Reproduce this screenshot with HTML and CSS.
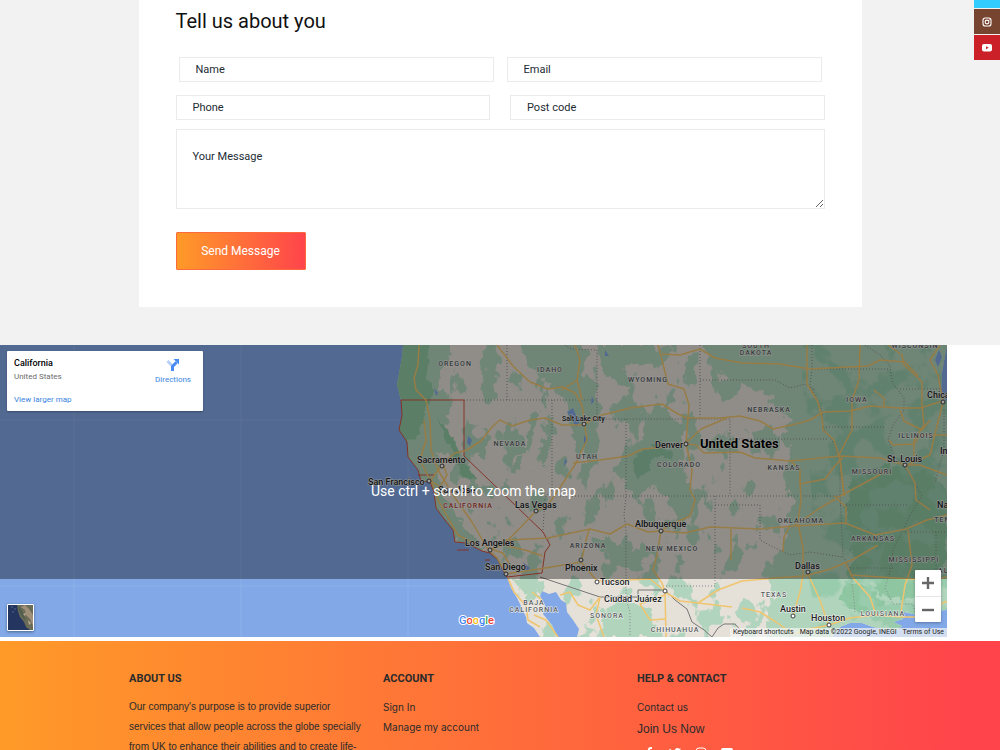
FILE: index.html
```html
<!DOCTYPE html>
<html lang="en">
<head>
    <meta charset="UTF-8">
    <meta name="viewport" content="width=device-width, initial-scale=1.0">
    <title>Contact Us</title>
    <link rel="stylesheet" href="styles.css">
</head>

<body>
    <!-- Sticky social links -->
    <nav class="social-bar" aria-label="Social links">
        <a class="twitter" href="#" aria-label="Twitter"></a>
        <a class="instagram" href="#" aria-label="Instagram">
            <svg width="10" height="10" viewBox="0 0 10 10" fill="none" stroke="#fff">
                <rect x="1" y="1" width="8" height="8" rx="2.3" stroke-width="1.1"/>
                <circle cx="5" cy="5" r="1.9" stroke-width="1.1"/>
                <circle cx="7.3" cy="2.8" r=".5" fill="#fff" stroke="none"/>
            </svg>
        </a>
        <a class="youtube" href="#" aria-label="YouTube">
            <svg width="10" height="8" viewBox="0 0 10 8">
                <rect width="10" height="7.4" rx="2" fill="#fff"/>
                <path d="M4 2.2 6.7 3.7 4 5.2z" fill="#cb2027"/>
            </svg>
        </a>
    </nav>

    <!-- Contact form -->
    <section class="contact">
        <form class="contact-form">
            <h2>Tell us about you</h2>
            <div class="row row-top">
                <input type="text" placeholder="Name" aria-label="Name">
                <input type="email" placeholder="Email" aria-label="Email">
            </div>
            <div class="row">
                <input type="tel" placeholder="Phone" aria-label="Phone">
                <input type="text" placeholder="Post code" aria-label="Post code">
            </div>
            <textarea placeholder="Your Message" aria-label="Your Message"></textarea>
            <button type="submit" class="send-btn">Send Message</button>
        </form>
    </section>

    <!-- Map -->
    <section class="map-section">
        <div class="map">
            <svg class="map-canvas" viewBox="0 345 947 292" preserveAspectRatio="xMidYMid slice" role="img" aria-label="Map of California">
                <defs>
                    <filter id="rough" x="-5%" y="-5%" width="110%" height="110%" color-interpolation-filters="sRGB">
                        <feTurbulence type="fractalNoise" baseFrequency=".09" numOctaves="3" seed="4"/>
                        <feDisplacementMap in="SourceGraphic" scale="14" xChannelSelector="R" yChannelSelector="G"/>
                    </filter>
                    <filter id="scatter" x="0" y="0" width="100%" height="100%" color-interpolation-filters="sRGB">
                        <feTurbulence type="fractalNoise" baseFrequency=".05 .035" numOctaves="4" seed="11"/>
                        <feColorMatrix values="0 0 0 0 .69  0 0 0 0 .83  0 0 0 0 .74  22 0 0 0 -12.6"/>
                        <feComposite in2="SourceGraphic" operator="in"/>
                    </filter>
                    <filter id="woods" x="0" y="0" width="100%" height="100%" color-interpolation-filters="sRGB">
                        <feTurbulence type="fractalNoise" baseFrequency=".035" numOctaves="4" seed="7"/>
                        <feColorMatrix values="0 0 0 0 .6  0 0 0 0 .8  0 0 0 0 .68  10 0 0 0 -5"/>
                        <feComposite in2="SourceGraphic" operator="in"/>
                    </filter>
                    <clipPath id="land">
                        <path d="M403 345 402 357 397 385 401 400 402 415 399 430 407 442 408 457 418 470 421 481 430 482 434 492 436 508 445 520 453 530 455 542 466 543 482 551 490 553 498 560 503 570 507 577 511 588 517 598 521 606 526 617 527 623 534 628 540 637 557 637 552 625 543 614 545 605 540 596 542 591 549 594 556 592 561 600 566 603 567 612 573 620 579 629 577 637 832 637 840 627 850 623 862 623 873 627 883 629 896 631 902 626 893 622 903 619 904 612 918 615 930 611 947 610V403L941 392 942 372 947 345z"/>
                    </clipPath>
                </defs>

                <rect x="0" y="345" width="947" height="292" fill="#82a8e7"/>
                <path class="grid-line" d="M74 345V637M241 345V637M408 345V637M0 420H401M0 586H510"/>

                <g clip-path="url(#land)">
                    <rect x="390" y="340" width="560" height="300" fill="#e5e0d8"/>
                    <rect x="450" y="340" width="330" height="300" filter="url(#scatter)"/>

                    <g filter="url(#rough)">
                        <!-- Plains and eastern states -->
                        <path fill="#b0d4bc" d="M700 330 712 370 742 385 768 392 778 410 790 420 782 440 792 452 780 475 792 500 785 540 770 566 775 600 766 622 774 650H960V330z"/>
                        <!-- Pacific coast -->
                        <path fill="#b0d4bc" d="M390 330H455L445 362 440 385 450 400 446 425 459 450 475 476 487 497 470 488 454 465 440 450 438 482 452 510 476 541 488 549 470 548 440 530 425 490 400 470 385 430z"/>
                        <path fill="#8fc8a2" d="M390 330H430L426 372 433 390 424 420 412 440 398 440 385 400z"/>
                        <path fill="#8fc8a2" d="M440 420 450 432 460 455 478 480 470 483 452 458z"/>
                        <!-- Rockies -->
                        <path fill="#b0d4bc" d="M520 340H575L590 355 580 372 598 385 596 420 588 440 578 460 572 430 566 400 550 385 530 368z"/>
                        <path fill="#b0d4bc" d="M597 345H650L662 360 655 370 640 360 622 365 634 392 615 382 600 365z"/>
                        <path fill="#b0d4bc" d="M645 420 668 412 684 428 682 455 690 485 694 510 680 522 668 498 650 485 636 500 620 478 628 452 642 440z"/>
                        <path fill="#92c7a4" d="M640 448 660 442 672 455 652 462 640 478 632 462z"/>
                        <path fill="#b0d4bc" d="M590 540 610 538 624 548 645 550 642 572 622 568 606 556z"/>
                        <path fill="#b0d4bc" d="M675 556 683 554 680 574 674 572z"/>
                        <path fill="#b0d4bc" d="M600 610 625 600 648 608 660 637H606z"/>
                        <path fill="#b0d4bc" d="M512 580 525 582 540 600 530 600 522 590z"/>
                        <path fill="#b0d4bc" d="M484 430 489 428 484 460 478 455zM533 412 538 413 530 450 524 448zM547 430 550 432 545 468 539 460zM516 455 522 455 517 476 511 470z"/>
                        <path fill="#b0d4bc" d="M714 345H800V378L765 374 740 380 722 370z"/>
                        <!-- Forests -->
                        <path fill="#8ec6a1" d="M852 475 890 465 930 470 947 490V560L925 590 905 600 880 595 865 570 850 550 843 520z"/>
                        <path fill="#8ec6a1" d="M856 545H885L892 560 880 575 850 578z"/>
                        <path fill="#8ec6a1" d="M845 580 875 590 885 612 860 612 838 600z"/>
                    </g>
                    <path d="M800 345H947V637H820L808 575 812 500z" filter="url(#woods)"/>
                    <path fill="#82a8e7" d="M567 412 573 408 576 415 581 420 576 427 572 420zM468 436 472 440 470 446 467 443zM434 388 438 393 436 396zM584 435 587 440 584 444zM592 396 594 402 591 404zM523 562 530 568 527 572zM939 350 942 357 938 367 935 360zM565 458 567 462 564 466zM605 350 609 356 605 356z"/>
                </g>

                <!-- State borders -->
                <path class="border" d="M507 345V400M464 400H597M552 400V490L545 497 543 530M565 345 571 349 597 350V419H730V496M626 419V496L624 515 626 530V600L630 612V637M560 496H761M700 345V419M700 380H775L790 388 805 384 815 390M730 439H828M715 496V586H663M715 505H760V540L775 548 790 555 810 552 842 557M761 496H840M812 345V370L810 385 822 410 823 428 835 445 840 462V495L843 556 850 568 853 590 855 612M812 369H890M823 427H886M850 568H893M865 345 880 355 890 366 892 382 904 398 904 410 893 425 888 440 894 455 905 468 915 483 922 496 910 515 902 532 893 550 891 568 885 588 893 604H913L916 615M900 389H940M936 532V600M905 532H947M840 505H908M944 410V450L935 482"/>
                <path class="country" d="M540 577 600 597H638V590H665L675 600 687 609 692 622 704 630 712 637 718 628 724 624 735 624 742 632"/>
                <path class="california" d="M401 400H464V456L543 532 550 545 545 552 542 573 507 577 503 570 498 560 490 553 482 551 466 543 455 542 453 530 445 520 436 508 434 492 430 482 421 481 418 470 408 457 407 442 399 430 402 415 401 400M418 475H435M457 550H469M485 560H490"/>

                <!-- Highways -->
                <g class="roads">
                    <path d="M419 345 418 365 414 378 416 390 426 400 430 420 431 450 438 470 455 498 472 522 487 548 497 558 506 574"/>
                    <path d="M431 480 444 462 455 453 467 450 481 441 492 427 500 420 512 426 530 420 545 418 562 425H583L592 420"/>
                    <path d="M497 345 513 366 530 382 548 389 562 387 575 393 582 405 584 420 587 440 576 463 565 480 548 505 536 511 520 528 503 545 490 550"/>
                    <path d="M575 345 580 360 577 380 562 390M577 380 582 400M583 423 602 415 630 408 662 404 678 414 687 418H720L740 416 760 421 773 429 800 423 812 419 823 412 850 411 870 406 900 408 920 408 943 401"/>
                    <path d="M658 345 662 360 668 384 684 389 689 405 686 444 692 470 690 490 695 500 690 516 670 525 661 531 657 555 653 570 662 583 665 592 666 637"/>
                    <path d="M573 463 600 460 628 456 643 449 665 447 686 443 701 429 727 418M686 444 696 445 704 453 740 452 755 458 790 461 840 456 880 458 905 465"/>
                    <path d="M662 354 680 355 700 349 715 358 742 363 780 364 810 369 868 366 880 360 905 362 918 376"/>
                    <path d="M807 345V384L818 402 822 418 823 430 834 440 840 460 844 496M860 345 859 380 852 400 852 430 844 445 838 457"/>
                    <path d="M490 550 507 540 548 538 590 529 610 534 627 524 648 532 661 531 685 533 710 527 760 529 794 526 845 523 875 535 906 529 927 520 947 515"/>
                    <path d="M506 574 545 568 581 562 597 581 625 580 650 579 665 591M581 562 587 537 589 530M665 592 680 601 698 603 718 590 742 581 775 578 805 576 830 569 852 560 878 545"/>
                    <path d="M800 480 801 500 798 523 803 548 803 575 800 592 793 616M807 572 820 600 828 624M794 526 817 510 842 495 870 480 888 470M790 526 784 537 783 552M846 523V507L834 496M845 562 853 578 870 597 876 615M850 575 895 578 930 580 947 577M908 530 912 565 905 585 901 612M905 465 915 483 916 500 930 510M905 465 920 465 947 475"/>
                    <path d="M888 345 902 355 904 365 915 375 922 382V405L924 425 914 440 914 456M940 345 930 360 938 375 943 402 936 430 930 455 905 466M900 410 904 421 922 430 930 420M889 440 893 445 914 444 920 435H947M843 457 834 467 825 479 800 484 800 470 790 460M840 458 844 496M874 390 884 398 884 406"/>
                    <path d="M698 603 732 607M731 529V560M742 608 760 612 776 622 793 634 810 629 829 625 850 618 875 615 902 617 915 617 947 601M666 619 650 620 640 604 665 595M560 595 570 592 578 605 590 610 600 597M600 597 596 615 604 637M508 578 514 592 526 606 528 620 540 627M534 615 546 620 558 637M532 592 542 600"/>
                    <path d="M424 420 426 440 420 460 430 480 440 487 447 475 442 462M431 480 438 500 447 516 458 535 477 545M487 548 503 553 510 565M503 545 525 550 543 556"/>
                </g>

                <!-- State names -->
                <g class="state">
                    <text x="455" y="366">OREGON</text>
                    <text x="550" y="372">IDAHO</text>
                    <text x="648" y="382">WYOMING</text>
                    <text x="756" y="348">SOUTH</text>
                    <text x="756" y="355">DAKOTA</text>
                    <text x="915" y="348">WISCONSIN</text>
                    <text x="769" y="412">NEBRASKA</text>
                    <text x="857" y="402">IOWA</text>
                    <text x="916" y="438">ILLINOIS</text>
                    <text x="510" y="446">NEVADA</text>
                    <text x="587" y="459">UTAH</text>
                    <text x="679" y="467">COLORADO</text>
                    <text x="784" y="470">KANSAS</text>
                    <text x="872" y="474">MISSOURI</text>
                    <text x="468" y="508" class="red">CALIFORNIA</text>
                    <text x="588" y="548">ARIZONA</text>
                    <text x="672" y="551">NEW MEXICO</text>
                    <text x="801" y="523">OKLAHOMA</text>
                    <text x="873" y="541">ARKANSAS</text>
                    <text x="958" y="522">TENNESSEE</text>
                    <text x="914" y="562">MISSISSIPPI</text>
                    <text x="958" y="573">ALABAMA</text>
                    <text x="774" y="597">TEXAS</text>
                    <text x="883" y="616">LOUISIANA</text>
                    <text x="534" y="605">BAJA</text>
                    <text x="534" y="612">CALIFORNIA</text>
                    <text x="607" y="618">SONORA</text>
                    <text x="675" y="632">CHIHUAHUA</text>
                </g>

                <!-- Cities -->
                <g class="dots">
                    <circle cx="442" cy="466" r="2"/>
                    <circle cx="429" cy="481" r="2"/>
                    <circle cx="536" cy="511" r="2"/>
                    <circle cx="490" cy="550" r="2"/>
                    <circle cx="506" cy="574" r="2"/>
                    <circle cx="584" cy="424" r="2"/>
                    <circle cx="686" cy="444" r="2"/>
                    <circle cx="581" cy="560" r="2"/>
                    <circle cx="597" cy="582" r="2"/>
                    <circle cx="665" cy="591" r="2"/>
                    <circle cx="661" cy="531" r="2"/>
                    <circle cx="808" cy="572" r="2"/>
                    <circle cx="793" cy="616" r="2"/>
                    <circle cx="829" cy="625" r="2"/>
                    <circle cx="905" cy="465" r="2"/>
                    <circle cx="943" cy="402" r="2"/>
                </g>
                <g class="city">
                    <text x="417" y="463">Sacramento</text>
                    <text x="368" y="485">San Francisco</text>
                    <text x="438" y="493">San Jose</text>
                    <text x="515" y="508">Las Vegas</text>
                    <text x="465" y="546">Los Angeles</text>
                    <text x="485" y="570">San Diego</text>
                    <text x="562" y="421" class="small">Salt Lake City</text>
                    <text x="655" y="448">Denver</text>
                    <text x="565" y="571">Phoenix</text>
                    <text x="600" y="585">Tucson</text>
                    <text x="604" y="602">Ciudad Juárez</text>
                    <text x="635" y="527">Albuquerque</text>
                    <text x="795" y="569">Dallas</text>
                    <text x="780" y="612">Austin</text>
                    <text x="811" y="621">Houston</text>
                    <text x="887" y="462">St. Louis</text>
                    <text x="927" y="398">Chicago</text>
                    <text x="940" y="454">Indianapolis</text>
                    <text x="937" y="508">Nashville</text>
                    <text x="700" y="448" class="country-name">United States</text>
                </g>
                <text x="459" y="624" class="google"><tspan fill="#4285f4">G</tspan><tspan fill="#ea4335">o</tspan><tspan fill="#fbbc05">o</tspan><tspan fill="#4285f4">g</tspan><tspan fill="#34a853">l</tspan><tspan fill="#ea4335">e</tspan></text>
            </svg>

            <div class="map-overlay"></div>
            <p class="map-hint">Use ctrl + scroll to zoom the map</p>

            <div class="place-card">
                <div class="place-info">
                    <strong>California</strong>
                    <span>United States</span>
                    <a href="#">View larger map</a>
                </div>
                <a class="directions" href="#">
                    <svg width="14" height="14" viewBox="0 0 14 14">
                        <path d="M6.5 8 1.5 3" fill="none" stroke="#b3cffa" stroke-width="3"/>
                        <path d="M6.5 13V8.500L10.500 4.300" fill="none" stroke="#4a8af4" stroke-width="3"/>
                        <path d="M7.500 1H13v5.500z" fill="#4a8af4"/>
                    </svg>
                    Directions
                </a>
            </div>

            <button type="button" class="satellite" aria-label="Show satellite imagery">
                <svg width="25" height="25" viewBox="0 0 25 25">
                    <rect width="25" height="25" fill="#24365f"/>
                    <path d="M9 0 10 6 12 12 16 17 18 22 22 25H25V0z" fill="#6a6c58"/>
                    <path d="M13 2 17 5 18 10 22 14 25 21V10L21 4 17 0z" fill="#a08f79"/>
                    <path d="M10 1 12 8 15 13 18 16 15 8 13 4z" fill="#4f5e4b"/>
                    <path d="M15 9 18 8 17 11zM20 15 23 18 21 20z" fill="#c0ab92"/>
                    <path d="M3 2H5M6 4H8M4 7H6" stroke="#4a668f"/>
                </svg>
            </button>

            <div class="zoom">
                <button type="button" aria-label="Zoom in">
                    <svg width="12" height="12" viewBox="0 0 12 12"><path d="M6 0V12M0 6H12" stroke="#666" stroke-width="2.4"/></svg>
                </button>
                <button type="button" aria-label="Zoom out">
                    <svg width="12" height="12" viewBox="0 0 12 12"><path d="M0 6H12" stroke="#666" stroke-width="2.4"/></svg>
                </button>
            </div>

            <div class="attribution">
                <a href="#">Keyboard shortcuts</a>
                <span>Map data ©2022 Google, INEGI</span>
                <a href="#">Terms of Use</a>
            </div>
        </div>
    </section>

    <!-- Footer -->
    <footer>
        <div class="footer-columns">
            <div class="about">
                <h3>ABOUT US</h3>
                <p>Our company's purpose is to provide superior services that allow people across the globe specially from UK to enhance their abilities and to create life-</p>
            </div>
            <div>
                <h3>ACCOUNT</h3>
                <a href="#">Sign In</a>
                <a href="#">Manage my account</a>
            </div>
            <div>
                <h3>HELP &amp; CONTACT</h3>
                <a href="#">Contact us</a>
                <p class="join">Join Us Now</p>
                <div class="join-icons">
                    <a href="#" aria-label="Facebook">
                        <svg width="12" height="12" viewBox="0 0 12 12"><path d="M4.800 12V7H3V5h1.800V3.300C4.800 1.200 6 0 7.800 0H9v2H8c-.8 0-1.100.4-1.100 1.100V5H9L8.700 7H6.900v5z" fill="#fff"/></svg>
                    </a>
                    <a href="#" aria-label="Twitter">
                        <svg width="12" height="12" viewBox="0 0 12 12"><path d="M12 2.500 10.800 3.700C10.800 8 7.500 11 4 11 2.500 11 1 10.500 0 9.800c1.300.1 2.500-.2 3.500-1C2.300 8.700 1.500 8 1.200 7h1C1 6.600.3 5.500.4 4.500l1 .3C.4 4 .1 2.500.7 1.500 2 3 3.800 4 6 4 5.600 2 7 1 8.400 1c.7 0 1.300.3 1.800.8L11.700 1.200 10.800 2.600z" fill="#fff"/></svg>
                    </a>
                    <a href="#" aria-label="Instagram">
                        <svg width="12" height="12" viewBox="0 0 12 12" fill="none" stroke="#fff"><rect x="1" y="1" width="10" height="10" rx="3"/><circle cx="6" cy="6" r="2.300"/></svg>
                    </a>
                    <a href="#" aria-label="YouTube">
                        <svg width="12" height="12" viewBox="0 0 12 12"><rect y="1" width="12" height="9" rx="2" fill="#fff"/><path d="M5 3.500 8 5.500 5 7.500z" fill="#ff5a45"/></svg>
                    </a>
                </div>
            </div>
        </div>
    </footer>
</body>

</html>
```
FILE: styles.css
```css
* {
    box-sizing: border-box;
}

body {
    margin: 0;
    font-family: Roboto, "Liberation Sans", sans-serif;
    background-color: #fff;
    color: #111;
}

a {
    text-decoration: none;
}

/* Social links on the right edge */
.social-bar {
    position: fixed;
    top: -17px;
    right: 0;
    z-index: 10;
    display: flex;
    flex-direction: column;
    gap: 1px;
}

.social-bar a {
    width: 26px;
    height: 25px;
    display: flex;
    align-items: center;
    justify-content: center;
}

.twitter {
    background-color: #3cf;
}

.instagram {
    background-color: #774430;
}

.youtube {
    background-color: #cb2027;
}

/* Contact form */
.contact {
    background-color: #f2f2f2;
    padding-bottom: 38px;
}

.contact-form {
    max-width: 723px;
    margin: 0 auto;
    padding: 9px 37px 37px;
    background-color: #fff;
}

h2 {
    margin: 0 0 23px;
    font-size: 20px;
    line-height: 25px;
    font-weight: 400;
}

.row {
    display: flex;
    gap: 20px;
    margin-bottom: 9px;
}

.row-top {
    gap: 13px;
    margin: 0 3px 13px;
}

.row input {
    flex: 1;
    min-width: 0;
    height: 25px;
    padding: 0 16px;
}

input,
textarea {
    border: 1px solid #ebebeb;
    background-color: #fff;
    font-family: inherit;
    font-size: 11px;
    color: #222b33;
}

input::placeholder,
textarea::placeholder {
    color: #222b33;
    opacity: 1;
}

textarea {
    display: block;
    width: 100%;
    height: 80px;
    padding: 20px 16px;
    resize: vertical;
}

.send-btn {
    display: block;
    width: 130px;
    height: 38px;
    margin-top: 23px;
    border: 1px solid #ff6a3c;
    border-radius: 1px;
    background: linear-gradient(to right, #ff9a28, #ff444b);
    color: #fff;
    font-family: inherit;
    font-size: 12px;
    cursor: pointer;
}

/* Map */
.map-section {
    padding: 0 53px 4px 0;
}

.map {
    position: relative;
    height: 292px;
    overflow: hidden;
}

.map-canvas {
    display: block;
    width: 100%;
    height: 100%;
}

.grid-line {
    stroke: #8eb0e7;
    fill: none;
}

.border {
    fill: none;
    stroke: #85868a;
    stroke-dasharray: 1 2;
}

.country {
    fill: none;
    stroke: #777;
}

.california {
    fill: none;
    stroke: #d0503f;
}

.roads {
    fill: none;
    stroke: #f0c56f;
    stroke-width: 1.5;
    stroke-linejoin: round;
}

.state text {
    font-size: 7px;
    font-weight: 500;
    letter-spacing: 1px;
    text-anchor: middle;
    fill: #55595d;
    stroke: #f4f4f0;
    stroke-width: 1px;
    paint-order: stroke;
}

.state .red {
    fill: #b3372c;
}

.dots {
    fill: #fff;
    stroke: #3c3f42;
}

.city text {
    font-size: 9px;
    font-weight: 500;
    fill: #202124;
    stroke: #f4f4f0;
    stroke-width: 1px;
    paint-order: stroke;
}

.city .small {
    font-size: 7px;
}

.city .country-name {
    font-size: 13px;
    font-weight: 700;
    fill: #000;
}

.google {
    font-size: 11px;
    font-weight: 500;
    stroke: #fff;
    stroke-width: 2px;
    paint-order: stroke;
}

.map-overlay {
    position: absolute;
    top: 0;
    left: 0;
    width: 100%;
    height: 80%;
    background-color: rgba(0, 0, 0, 0.37);
}

.map-hint {
    position: absolute;
    top: 50%;
    width: 100%;
    margin: -9px 0 0;
    line-height: 18px;
    font-size: 14px;
    text-align: center;
    color: #fff;
}

.place-card {
    position: absolute;
    top: 6px;
    left: 7px;
    width: 196px;
    height: 60px;
    padding: 6px 12px 0 7px;
    display: flex;
    justify-content: space-between;
    background-color: #fff;
    border-radius: 1px;
    box-shadow: 0 1px 2px rgba(0, 0, 0, 0.3);
    font-size: 8px;
}

.place-info {
    display: flex;
    flex-direction: column;
}

.place-info strong {
    font-size: 9px;
    line-height: 12px;
    font-weight: 500;
    color: #000;
}

.place-info span {
    margin: 2px 0 11px;
    line-height: 12px;
    color: #6b6b6b;
}

.place-card a {
    line-height: 12px;
    color: #3a84df;
}

.directions {
    display: flex;
    flex-direction: column;
    align-items: center;
    gap: 2px;
    padding-top: 1px;
}

.satellite {
    position: absolute;
    left: 7px;
    bottom: 6px;
    width: 27px;
    height: 27px;
    padding: 0;
    border: 1px solid #fff;
    border-radius: 1px;
    overflow: hidden;
    box-shadow: 0 1px 3px rgba(0, 0, 0, 0.4);
    cursor: pointer;
}

.satellite svg {
    display: block;
}

.zoom {
    position: absolute;
    right: 6px;
    bottom: 15px;
    width: 26px;
    background-color: #fff;
    border-radius: 1px;
    box-shadow: 0 1px 3px rgba(0, 0, 0, 0.3);
}

.zoom button {
    display: flex;
    align-items: center;
    justify-content: center;
    width: 100%;
    height: 26px;
    padding: 0;
    border: none;
    background: none;
    cursor: pointer;
}

.zoom button + button {
    border-top: 1px solid #e6e6e6;
}

.attribution {
    position: absolute;
    right: 0;
    bottom: 0;
    display: flex;
    font-size: 7px;
    line-height: 9px;
    background-color: rgba(245, 245, 245, 0.7);
}

.attribution a,
.attribution span {
    padding: 0 3px;
    color: #222;
}

/* Footer */
footer {
    height: 240px;
    padding: 30px 20px 0;
    background: linear-gradient(to right, #ff9a28, #ff444b 97%);
}

.footer-columns {
    max-width: 742px;
    margin: 0 auto;
    display: grid;
    grid-template-columns: repeat(3, 1fr);
    gap: 20px;
}

h3 {
    margin: 0 0 10px;
    font-size: 11px;
    line-height: 16px;
    color: #2b2b2b;
}

.footer-columns p,
.footer-columns a {
    margin: 0;
    font-size: 10px;
    line-height: 20px;
    color: #2b2b2b;
}

.footer-columns a {
    display: block;
    font-family: Inter, sans-serif;
}

.about p {
    font-family: "Liberation Sans", sans-serif;
}

.footer-columns .join {
    font-family: "Liberation Sans", sans-serif;
    font-size: 12px;
    line-height: 24px;
}

.join-icons {
    display: flex;
    gap: 14px;
    padding: 6px 6px 0;
}

.join-icons svg {
    display: block;
}
```
